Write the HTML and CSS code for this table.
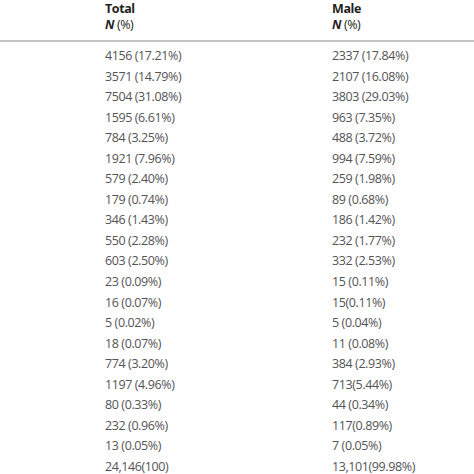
FILE: index.html
```html
<!DOCTYPE html>
<html>
<head>
<meta charset="utf-8">
<link rel="stylesheet" href="styles.css">
</head>
<body>
<div class="tbl">
  <div class="head">
    <div class="cell"></div>
    <div class="cell"><b>Total</b><br><i class="n">N</i> (%)</div>
    <div class="cell"><b>Male</b><br><i class="n">N</i> (%)</div>
  </div>
  <div class="body">
    <div class="row"><span></span><span>4156 (17.21%)</span><span>2337 (17.84%)</span></div>
    <div class="row"><span></span><span>3571 (14.79%)</span><span>2107 (16.08%)</span></div>
    <div class="row"><span></span><span>7504 (31.08%)</span><span>3803 (29.03%)</span></div>
    <div class="row"><span></span><span>1595 (6.61%)</span><span>963 (7.35%)</span></div>
    <div class="row"><span></span><span>784 (3.25%)</span><span>488 (3.72%)</span></div>
    <div class="row"><span></span><span>1921 (7.96%)</span><span>994 (7.59%)</span></div>
    <div class="row"><span></span><span>579 (2.40%)</span><span>259 (1.98%)</span></div>
    <div class="row"><span></span><span>179 (0.74%)</span><span>89 (0.68%)</span></div>
    <div class="row"><span></span><span>346 (1.43%)</span><span>186 (1.42%)</span></div>
    <div class="row"><span></span><span>550 (2.28%)</span><span>232 (1.77%)</span></div>
    <div class="row"><span></span><span>603 (2.50%)</span><span>332 (2.53%)</span></div>
    <div class="row"><span></span><span>23 (0.09%)</span><span>15 (0.11%)</span></div>
    <div class="row"><span></span><span>16 (0.07%)</span><span>15(0.11%)</span></div>
    <div class="row"><span></span><span>5 (0.02%)</span><span>5 (0.04%)</span></div>
    <div class="row"><span></span><span>18 (0.07%)</span><span>11 (0.08%)</span></div>
    <div class="row"><span></span><span>774 (3.20%)</span><span>384 (2.93%)</span></div>
    <div class="row"><span></span><span>1197 (4.96%)</span><span>713(5.44%)</span></div>
    <div class="row"><span></span><span>80 (0.33%)</span><span>44 (0.34%)</span></div>
    <div class="row"><span></span><span>232 (0.96%)</span><span>117(0.89%)</span></div>
    <div class="row"><span></span><span>13 (0.05%)</span><span>7 (0.05%)</span></div>
    <div class="row"><span></span><span>24,146(100)</span><span>13,101(99.98%)</span></div>
  </div>
</div>
</body>
</html>
```
FILE: styles.css
```css
html, body {
  margin: 0;
  padding: 0;
  background: #ffffff;
}
body {
  font-family: "Open Sans", "Noto Sans", sans-serif;
  font-size: 12.5px;
  letter-spacing: -0.4px;
  width: 474px;
  height: 474px;
  overflow: hidden;
}
.head {
  display: grid;
  grid-template-columns: 105px 227px 1fr;
  line-height: 16px;
  color: #231f20;
  padding-top: 1px;
  padding-bottom: 7px;
  border-bottom: 2px solid #c4c4c4;
}
.head b {
  font-weight: 700;
}
.n {
  font-weight: 700;
  font-style: italic;
}
.body {
  padding-top: 4px;
  color: #545456;
}
.row {
  display: grid;
  grid-template-columns: 105px 227px 1fr;
  line-height: 20.55px;
  white-space: nowrap;
}
```
